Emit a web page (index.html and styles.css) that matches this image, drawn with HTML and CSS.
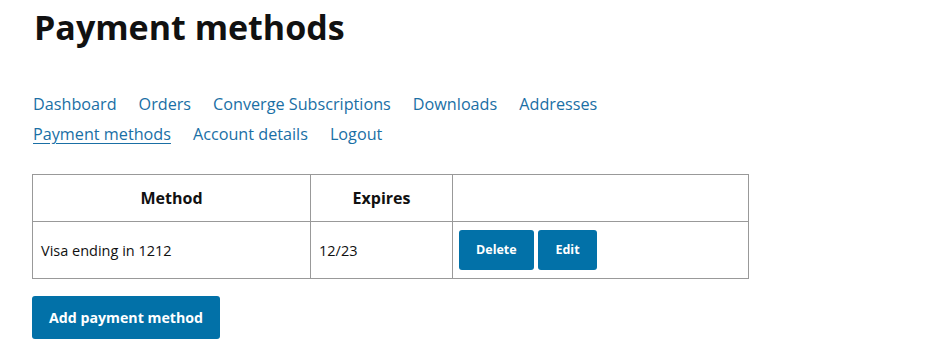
FILE: index.html
```html
<!DOCTYPE html>
<html lang="en">
<head>
    <meta charset="UTF-8">
    <meta name="viewport" content="width=device-width, initial-scale=1.0">
    <title>Payment methods</title>
    <link rel="stylesheet" href="styles.css">
</head>
<body>
    <h1>Payment methods</h1>

    <nav class="account-nav">
        <a href="#">Dashboard</a>
        <a href="#">Orders</a>
        <a href="#">Converge Subscriptions</a>
        <a href="#">Downloads</a>
        <a href="#">Addresses</a>
        <a href="#" class="current">Payment methods</a>
        <a href="#">Account details</a>
        <a href="#">Logout</a>
    </nav>

    <table class="methods-table">
        <thead>
            <tr>
                <th class="col-method">Method</th>
                <th class="col-expires">Expires</th>
                <th class="col-actions"></th>
            </tr>
        </thead>
        <tbody>
            <tr>
                <td>Visa ending in 1212</td>
                <td>12/23</td>
                <td class="actions">
                    <a href="#" class="button small">Delete</a>
                    <a href="#" class="button small">Edit</a>
                </td>
            </tr>
        </tbody>
    </table>

    <div class="add-row">
        <a href="#" class="button add-btn">Add payment method</a>
    </div>
</body>
</html>
```

FILE: styles.css
```css
body {
    font-family: "Open Sans", "Noto Sans", Arial, sans-serif;
    margin: 0;
    padding: 3px 33px 0 33px;
    background-color: #fff;
    color: #111;
}

h1 {
    font-size: 34px;
    font-weight: 700;
    margin: 0 0 42px 1px;
    line-height: 48px;
}

.account-nav {
    display: flex;
    flex-wrap: wrap;
    column-gap: 22px;
    row-gap: 8px;
    max-width: 600px;
    margin-bottom: 29px;
}

.account-nav a {
    color: #1a6fa5;
    text-decoration: none;
    font-size: 16.2px;
    line-height: 22px;
}

.account-nav a.current {
    text-decoration: underline;
    text-underline-offset: 3px;
}

.methods-table {
    border-collapse: collapse;
    width: 717px;
    margin: 0 0 17px -1px;
}

.methods-table th,
.methods-table td {
    border: 1px solid #999;
}

.methods-table th {
    font-size: 16px;
    font-weight: 700;
    height: 44px;
    text-align: center;
}

.methods-table td {
    font-size: 14.5px;
    height: 56px;
    padding: 0 8px;
}

.methods-table td.actions {
    padding: 0 6px;
}

.col-method {
    width: 275px;
}

.col-expires {
    width: 139px;
}

.actions a + a {
    margin-left: 1px;
}

.button {
    display: inline-block;
    background-color: #0271a8;
    color: #fff;
    font-weight: 700;
    text-decoration: none;
    border-radius: 3px;
}

.button.small {
    font-size: 12.5px;
    line-height: 40px;
    padding: 0 17px;
}

.add-row {
    margin-left: -1px;
}

.add-btn {
    font-size: 14.2px;
    line-height: 43px;
    padding: 0 17px;
}
```
